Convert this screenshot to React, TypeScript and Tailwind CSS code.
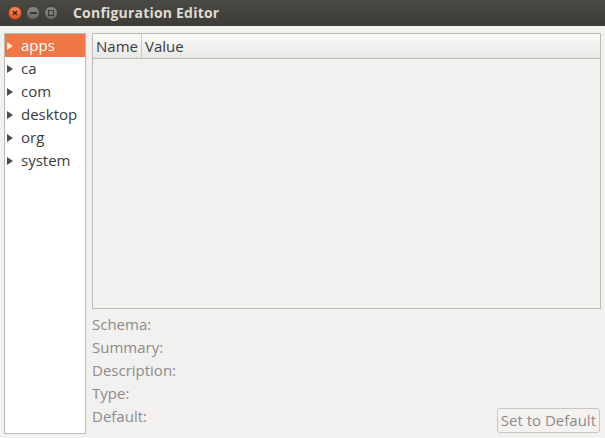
import React from "react";

const items = ["apps", "ca", "com", "desktop", "org", "system"];
const labels = ["Schema:", "Summary:", "Description:", "Type:", "Default:"];

function Tri({ white }: { white?: boolean }) {
  return (
    <svg width="8" height="10" viewBox="0 0 8 10" className="shrink-0">
      <path d="M1 1 L7 5 L1 9 Z" fill={white ? "#fbe3d6" : "#4c4c4c"} />
    </svg>
  );
}

export default function App() {
  return (
    <div
      className="w-[605px] h-[438px] bg-[#f2f1f0] flex flex-col overflow-hidden"
      style={{ fontFamily: '"Open Sans", "DejaVu Sans", sans-serif' }}
    >
      <div className="h-[26px] shrink-0 bg-gradient-to-b from-[#4a4944] to-[#3c3b37] flex items-center pl-[8px]">
        <div className="flex items-center gap-[4px]">
          <div className="w-[14px] h-[14px] rounded-full bg-gradient-to-b from-[#f58a5b] to-[#e0541f] border border-[#8c3a1a] flex items-center justify-center">
            <svg width="6" height="6" viewBox="0 0 6 6">
              <path d="M1 1 L5 5 M5 1 L1 5" stroke="#3c2014" strokeWidth="1.3" />
            </svg>
          </div>
          <div className="w-[14px] h-[14px] rounded-full bg-gradient-to-b from-[#8a8984] to-[#6a6964] border border-[#403f3b] flex items-center justify-center">
            <div className="w-[7px] h-[1.5px] bg-[#3a3935]" />
          </div>
          <div className="w-[14px] h-[14px] rounded-full bg-gradient-to-b from-[#8a8984] to-[#6a6964] border border-[#403f3b] flex items-center justify-center">
            <div className="w-[6px] h-[6px] border border-[#3a3935]" />
          </div>
        </div>
        <div className="ml-[15px] text-[14px] font-bold text-[#dfdbd2] leading-none tracking-[0.2px]">
          Configuration Editor
        </div>
      </div>
      <div className="flex-1 flex pl-[4px] pt-[7px] pb-[4px] pr-[4px] gap-[6px]">
        <div className="w-[82px] bg-white border border-[#bdbab5] flex flex-col">
          {items.map((it, i) => (
            <div
              key={it}
              className={
                "h-[23px] flex items-center pl-[1px] gap-[7px] text-[15px] " +
                (i === 0 ? "bg-[#f07746] text-white" : "text-[#3c3c3c]")
              }
            >
              <Tri white={i === 0} />
              <span>{it}</span>
            </div>
          ))}
        </div>
        <div className="flex-1 flex flex-col">
          <div className="h-[276px] border border-[#bdbab5] bg-[#f2f1f0] flex flex-col">
            <div className="h-[25px] flex bg-gradient-to-b from-[#fbfbfa] to-[#e8e7e5] border-b border-[#bdbab5] text-[15px] text-[#3c3c3c]">
              <div className="w-[49px] border-r border-[#cfccc8] flex items-center pl-[3px]">Name</div>
              <div className="flex items-center pl-[3px]">Value</div>
            </div>
          </div>
          <div className="flex flex-1 pt-[4px]">
            <div className="flex flex-col text-[15px] text-[#8d8b88]">
              {labels.map((l) => (
                <div key={l} className="h-[23px] flex items-center">
                  {l}
                </div>
              ))}
            </div>
            <div className="flex-1 flex items-end justify-end pr-[1px] pb-[1px]">
              <div className="h-[25px] px-[3px] border border-[#c9c6c2] rounded-[3px] bg-[#f4f3f2] flex items-center text-[15px] text-[#8d8b88]">
                Set to Default
              </div>
            </div>
          </div>
        </div>
      </div>
    </div>
  );
}
